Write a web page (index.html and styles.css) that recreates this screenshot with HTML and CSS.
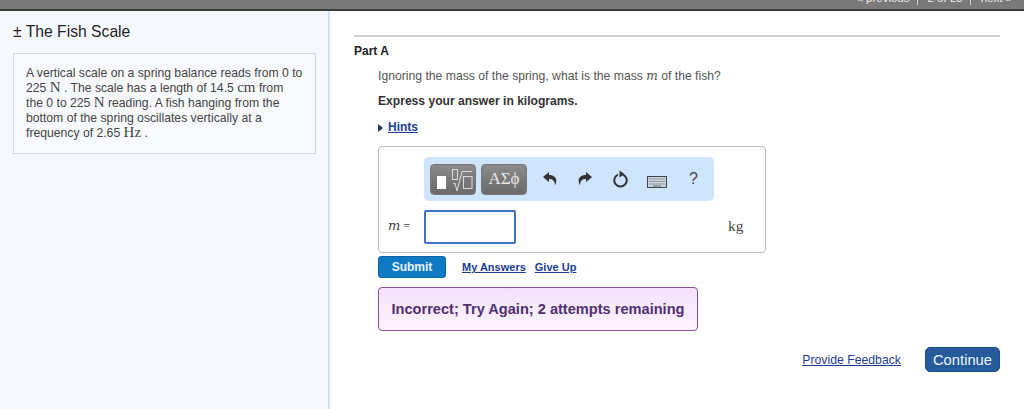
FILE: index.html
```html
<!DOCTYPE html>
<html>
<head>
    <title>The Fish Scale</title>
    <link rel="stylesheet" href="styles.css">
</head>
<body>
    <div class="top-bar">
        <div class="pager">
            <span>&laquo; previous</span><i></i><span>2 of 28</span><i></i><span>next &raquo;</span>
        </div>
    </div>
    <div class="page">
        <div class="side">
            <h1>&plusmn; The Fish Scale</h1>
            <div class="intro">
                A vertical scale on a spring balance reads from 0 to<br>
                225 <span class="unit">N</span> . The scale has a length of 14.5 <span class="unit">cm</span> from<br>
                the 0 to 225 <span class="unit">N</span> reading. A fish hanging from the<br>
                bottom of the spring oscillates vertically at a<br>
                frequency of 2.65 <span class="unit">Hz</span> .
            </div>
        </div>
        <div class="main">
            <h2>Part A</h2>
            <div class="question">
                <p class="ask">Ignoring the mass of the spring, what is the mass <em class="var">m</em> of the fish?</p>
                <p class="express">Express your answer in kilograms.</p>
                <p class="hints"><span class="arrow"></span><a href="#">Hints</a></p>
                <div class="answer-box">
                    <div class="toolbar">
                        <div class="tool-btn tool-math">
                            <svg width="44" height="29" viewBox="0 0 44 29">
                                <rect x="6" y="11" width="9" height="13" fill="#fff"/>
                                <rect x="21.500" y="4.500" width="5" height="10" fill="none" stroke="#ddd"/>
                                <path d="M22 19l2-1 2 8 5-19.500h10" fill="none" stroke="#ddd"/>
                                <rect x="32.500" y="11.500" width="8.500" height="12" fill="none" stroke="#ddd"/>
                            </svg>
                        </div>
                        <div class="tool-btn tool-greek">&Alpha;&Sigma;&#981;</div>
                        <div class="tool-icons">
                            <svg width="14" height="14" viewBox="0 0 14 14"><path d="M6 0L0 5l6 5V7c3.500 0 6 1.500 6 6.500C15 8 13 3 6 3z" fill="#333"/></svg>
                            <svg width="14" height="14" viewBox="0 0 14 14"><path d="M8 0l6 5-6 5V7c-3.500 0-6 1.500-6 6.500C-1 8 1 3 8 3z" fill="#333"/></svg>
                            <svg width="16" height="18" viewBox="0 0 16 18"><path d="M5 4.700a6.200 6.200 0 1 0 5 0" fill="none" stroke="#333" stroke-width="2"/><path d="M6.500 .5L11.500 4 6.500 7.500z" fill="#333"/></svg>
                            <svg class="kb" width="20" height="12" viewBox="0 0 20 12"><rect x=".5" y=".5" width="19" height="11" fill="#c9d3dd" stroke="#444"/><path d="M2.500 3h15M2.500 5.500h15M2.500 8h15" stroke="#666" stroke-dasharray="1 1"/><path d="M6 10h8" stroke="#666"/></svg>
                            <span class="help">?</span>
                        </div>
                    </div>
                    <div class="answer-row">
                        <span class="label"><em class="var">m</em> =</span>
                        <div class="input"></div>
                        <span class="kg">kg</span>
                    </div>
                </div>
                <div class="actions">
                    <button class="submit">Submit</button>
                    <a href="#">My Answers</a>
                    <a href="#">Give Up</a>
                </div>
                <div class="feedback">Incorrect; Try Again; 2 attempts remaining</div>
            </div>
            <div class="footer">
                <a href="#">Provide Feedback</a>
                <button class="continue">Continue</button>
            </div>
        </div>
    </div>
</body>
</html>
```

FILE: styles.css
```css
*{padding: 0;margin: 0;box-sizing: border-box;}
html,body{height: 100%;overflow: hidden;}
body{
    font-family: "Liberation Sans", Arial, sans-serif;
    background: #fff;
    color: #333;
}
a{color: #1c3d95;text-decoration: underline;}
.top-bar{
    height: 11px;
    background: #797979;
    border-bottom: 2px solid #3c3c3c;
    overflow: hidden;
}
.pager{
    display: flex;
    justify-content: flex-end;
    align-items: center;
    margin-top: -10px;
    padding-right: 12px;
    height: 16px;
    font-size: 11.5px;
    color: #eee;
}
.pager i{width: 1px;height: 14px;margin: 0 10px 0 7px;background: #ddd;}
.page{
    display: flex;
    height: 398px;
}
.side{
    width: 330px;
    background: #f5f9ff;
    border-right: 2px solid #d8e3f1;
    padding: 11px 13px 0 13px;
}
.side h1{
    font-size: 15.7px;
    font-weight: normal;
    line-height: 20px;
    color: #222;
}
.intro{
    width: 303px;
    height: 101px;
    margin-top: 11px;
    padding: 12px 11px 12px 12px;
    background: #f7f9fc;
    border: 1px solid #ccd8e6;
    font-size: 12.2px;
    line-height: 15px;
    color: #444;
}
.unit{
    font-family: "Liberation Serif", serif;
    font-size: 15px;
    line-height: 0;
}
.var{
    font-family: "DejaVu Serif", serif;
    font-style: italic;
    line-height: 0;
}
.main{
    flex: 1;
    padding: 24px 24px 0 24px;
}
.main h2{
    border-top: 2px solid #d0d0d0;
    padding-top: 6px;
    font-size: 12px;
    line-height: 16px;
    color: #222;
}
.question{padding-left: 24px;}
.ask{
    margin-top: 9px;
    font-size: 12.2px;
    line-height: 16px;
    color: #555;
}
.express{
    margin-top: 9px;
    font-size: 12.1px;
    line-height: 16px;
    font-weight: bold;
    color: #333;
}
.hints{
    margin-top: 10px;
    font-size: 12px;
    line-height: 16px;
    font-weight: bold;
}
.arrow{
    display: inline-block;
    margin-right: 5px;
    border-left: 5px solid #1c3d6d;
    border-top: 4px solid transparent;
    border-bottom: 4px solid transparent;
    vertical-align: -1px;
}
.answer-box{
    width: 388px;
    height: 107px;
    margin-top: 11px;
    padding-top: 10px;
    border: 1px solid #bbb;
    border-radius: 4px;
}
.toolbar{
    display: flex;
    align-items: center;
    gap: 5px;
    width: 290px;
    height: 44px;
    margin-left: 45px;
    padding-left: 6px;
    background: #cfe4fd;
    border-radius: 5px;
}
.tool-btn{
    display: flex;
    align-items: center;
    justify-content: center;
    height: 31px;
    background: linear-gradient(#8a8a8a, #6a6a6a);
    border: 1px solid #777;
    border-radius: 4px;
    color: #e8e8e8;
}
.tool-math{width: 46px;}
.tool-greek{
    width: 46px;
    font-family: "Liberation Serif", "DejaVu Serif", serif;
    font-size: 17px;
}
.tool-icons{
    display: flex;
    align-items: center;
    gap: 21px;
    margin-left: 11px;
}
.kb{margin: 6px 0 0 -3px;}
.help{
    margin-left: 1px;
    font-size: 16px;
    color: #444;
}
.answer-row{
    display: flex;
    align-items: center;
    margin-top: 9px;
}
.label{
    width: 45px;
    padding: 0 0 2px 9px;
    font-family: "Liberation Serif", serif;
    font-size: 12px;
    color: #444;
}
.label .var{font-size: 13px;}
.input{
    width: 92px;
    height: 34px;
    background: #fff;
    border: 2px solid #3f73c8;
    border-radius: 2px;
}
.kg{
    margin-left: 212px;
    padding-bottom: 2px;
    font-family: "Liberation Serif", serif;
    font-size: 15.5px;
    color: #444;
}
.actions{
    display: flex;
    align-items: center;
    margin-top: 3px;
    font-size: 11px;
    font-weight: bold;
}
.actions a{margin-right: 9px;}
.submit{
    width: 68px;
    height: 22px;
    margin-right: 16px;
    background: #0f79c4;
    border: 1px solid #0b63a3;
    border-radius: 3px;
    font-family: inherit;
    font-size: 12px;
    font-weight: bold;
    color: #e8f3fb;
}
.feedback{
    width: 320px;
    height: 44px;
    margin-top: 9px;
    background: linear-gradient(#f4e1fb, #fdf4ff);
    border: 1px solid #8a4f9e;
    border-radius: 4px;
    font-size: 14.6px;
    font-weight: bold;
    line-height: 42px;
    text-align: center;
    color: #50306f;
}
.footer{
    display: flex;
    justify-content: flex-end;
    align-items: center;
    gap: 24px;
    margin-top: 16px;
    font-size: 12.25px;
}
.continue{
    width: 75px;
    height: 25px;
    background: #255b9b;
    border: 1px solid #1f4f88;
    border-radius: 5px;
    font-family: inherit;
    font-size: 14.75px;
    color: #eef4fb;
}
```
